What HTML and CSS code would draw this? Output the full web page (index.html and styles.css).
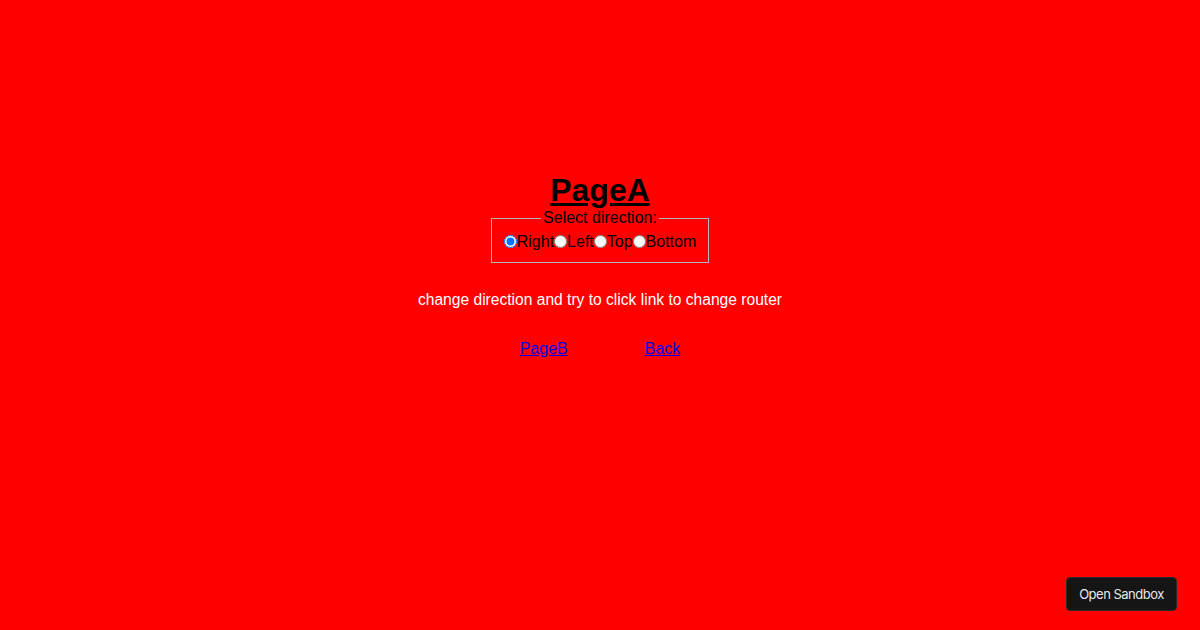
FILE: index.html
```html
<!DOCTYPE html>
<html>
<head>
<meta charset="utf-8">
<link rel="stylesheet" href="styles.css">
</head>
<body>
<div class="page">
  <h1 class="title">PageA</h1>
  <fieldset class="dirs">
    <legend>Select direction:</legend>
    <input type="radio" name="d" id="r" checked><label for="r">Right</label><input type="radio" name="d" id="l"><label for="l">Left</label><input type="radio" name="d" id="t"><label for="t">Top</label><input type="radio" name="d" id="b"><label for="b">Bottom</label>
  </fieldset>
  <p class="hint">change direction and try to click link to change router</p>
  <div class="links">
    <a href="#">PageB</a>
    <a href="#">Back</a>
  </div>
</div>
<button class="sandbox">Open Sandbox</button>
</body>
</html>
```
FILE: styles.css
```css
html, body {
  margin: 0;
  height: 100%;
}
body {
  background: #ff0000;
  font-family: "Liberation Sans", Arial, sans-serif;
  font-size: 16px;
  overflow: hidden;
}
.page {
  display: flex;
  flex-direction: column;
  align-items: center;
  padding-top: 172px;
  text-align: center;
}
.title {
  margin: 0;
  font-size: 32px;
  font-weight: bold;
  text-decoration: underline;
  line-height: 37px;
}
.dirs {
  margin: 0;
  padding: 5.6px 12px 11px;
  border: 1px solid #b5b5b5;
}
.dirs legend {
  padding: 0 2px;
  line-height: 18px;
}
.dirs input {
  margin: 0;
  width: 13px;
  height: 13px;
  vertical-align: -1px;
}
.dirs label {
  line-height: 18px;
}
.hint {
  margin: 28px 0 0;
  color: #ffffff;
  font-size: 15.6px;
  line-height: 18px;
}
.links {
  margin-top: 31px;
  display: flex;
  gap: 77px;
  line-height: 18px;
}
.links a {
  color: #0000ee;
}
.sandbox {
  position: fixed;
  right: 23px;
  bottom: 19px;
  width: 111px;
  height: 34px;
  background: #151515;
  color: #e8e8e8;
  border: 1px solid #2a2a2a;
  border-radius: 4px;
  font-family: Inter, "Liberation Sans", sans-serif;
  font-size: 13px;
  letter-spacing: -0.5px;
  padding: 0;
}
```
